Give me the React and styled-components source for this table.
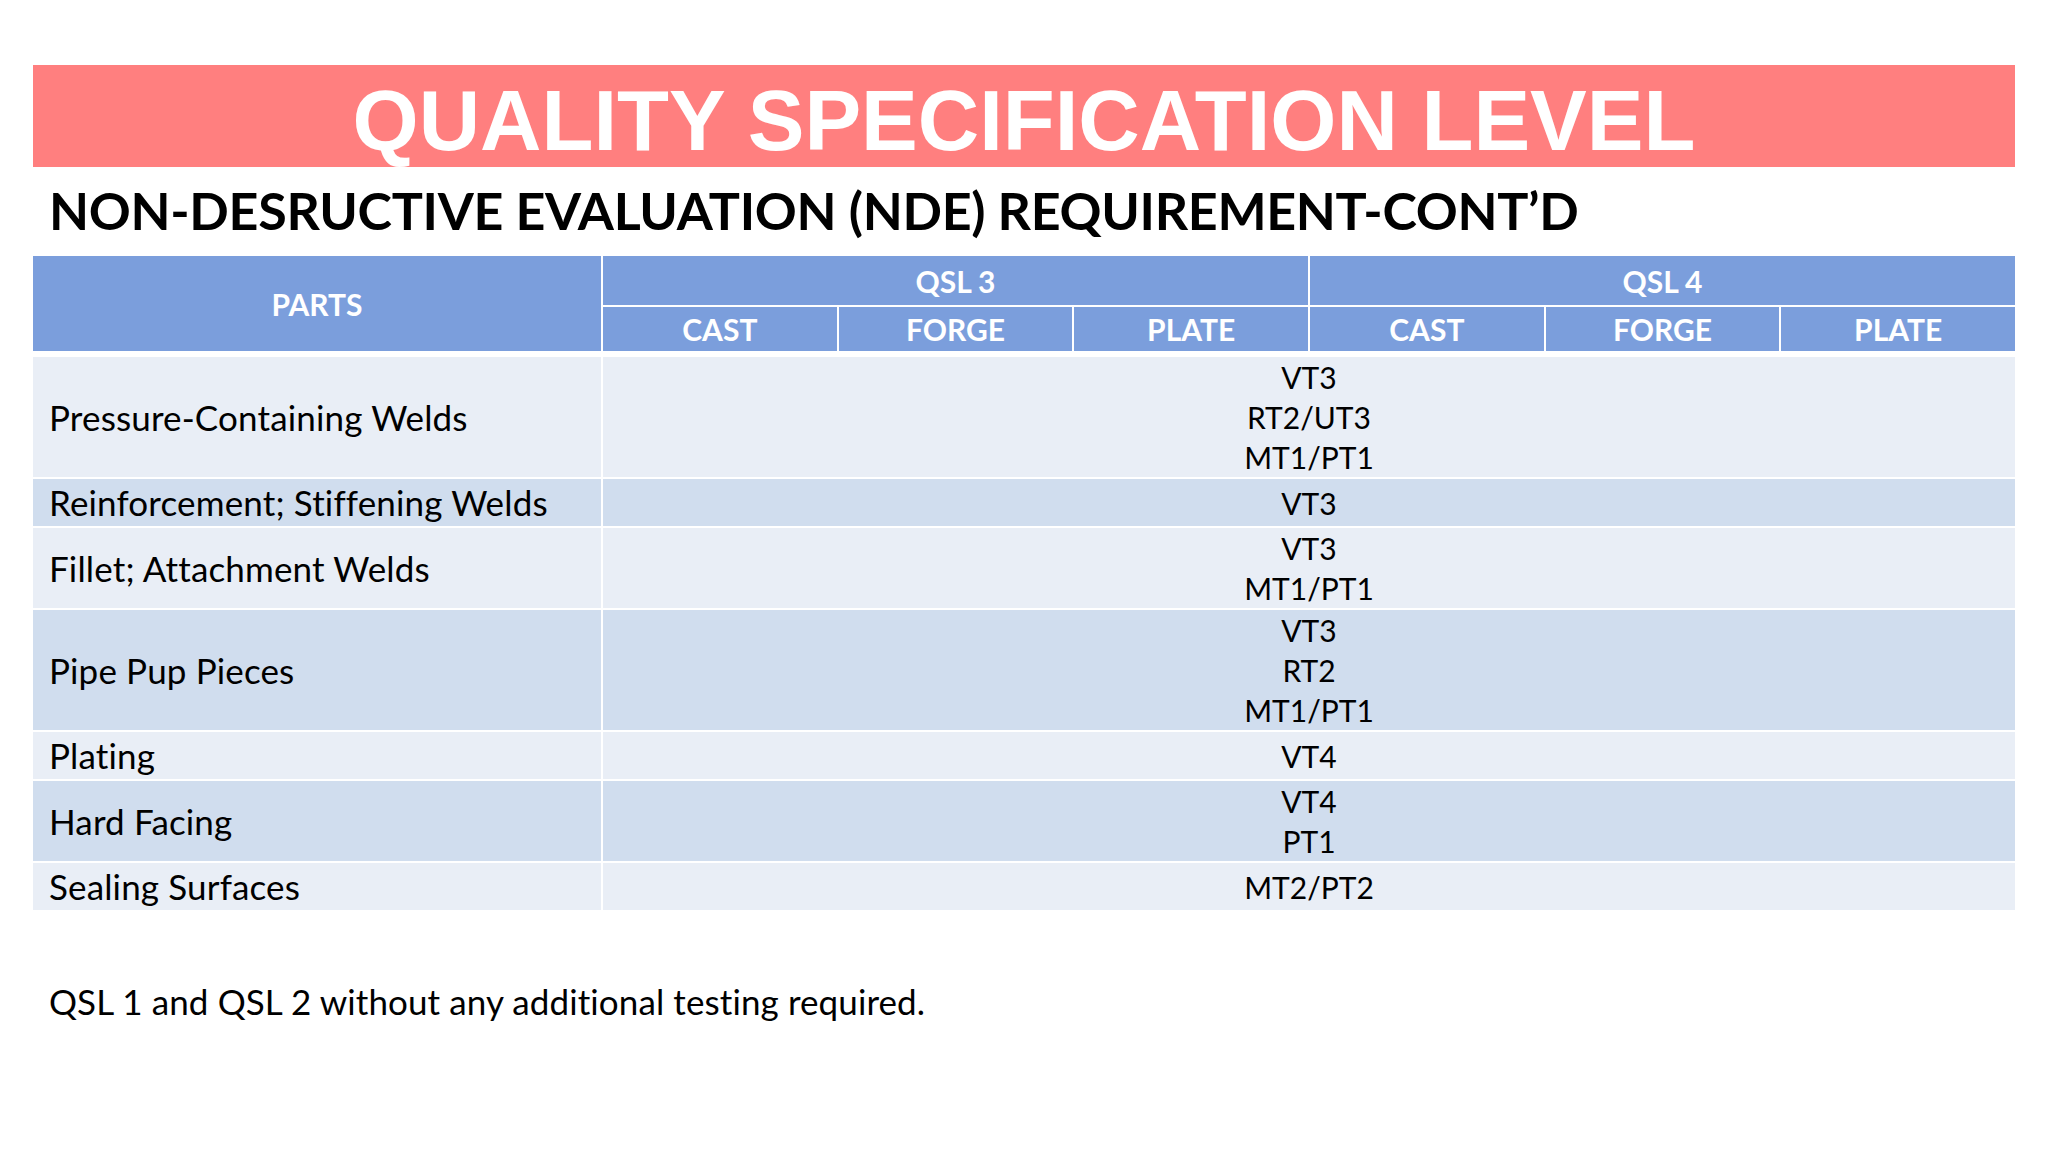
import React from "react";
import styled, { createGlobalStyle } from "styled-components";

const GlobalStyle = createGlobalStyle`
  html, body {
    margin: 0;
    padding: 0;
    background: #ffffff;
  }
  body {
    font-family: "Lato", "Open Sans", sans-serif;
  }
`;

const rows = [
  { part: "Pressure-Containing Welds", tests: ["VT3", "RT2/UT3", "MT1/PT1"] },
  { part: "Reinforcement; Stiffening Welds", tests: ["VT3"] },
  { part: "Fillet; Attachment Welds", tests: ["VT3", "MT1/PT1"] },
  { part: "Pipe Pup Pieces", tests: ["VT3", "RT2", "MT1/PT1"] },
  { part: "Plating", tests: ["VT4"] },
  { part: "Hard Facing", tests: ["VT4", "PT1"] },
  { part: "Sealing Surfaces", tests: ["MT2/PT2"] },
];

const subCols = ["CAST", "FORGE", "PLATE", "CAST", "FORGE", "PLATE"];

function App() {
  return (
    <Page>
      <GlobalStyle />
      <TitleBar>QUALITY SPECIFICATION LEVEL</TitleBar>
      <Subtitle>NON-DESRUCTIVE EVALUATION (NDE) REQUIREMENT-CONT’D</Subtitle>

      <HeaderGrid>
        <HeadCell $rows={2}>PARTS</HeadCell>
        <HeadCell $span={3}>QSL 3</HeadCell>
        <HeadCell $span={3}>QSL 4</HeadCell>
        {subCols.map((c, i) => (
          <HeadCell key={i}>{c}</HeadCell>
        ))}
      </HeaderGrid>

      <Body>
        {rows.map((r, i) => (
          <Row key={r.part} $dark={i % 2 === 1}>
            <PartCell>{r.part}</PartCell>
            <TestCell>
              {r.tests.map((t) => (
                <div key={t}>{t}</div>
              ))}
            </TestCell>
          </Row>
        ))}
      </Body>

      <Note>QSL 1 and QSL 2 without any additional testing required.</Note>
    </Page>
  );
}

export default App;

const Page = styled.div`
  width: 2048px;
  min-height: 1152px;
  box-sizing: border-box;
  padding: 65px 33px 0 33px;
`;

const TitleBar = styled.div`
  background: #ff7f7f;
  color: #ffffff;
  height: 102px;
  box-sizing: border-box;
  padding-top: 10px;
  line-height: 92px;
  text-align: center;
  font-family: "Liberation Sans", Arial, sans-serif;
  font-weight: 700;
  font-size: 85px;
  white-space: nowrap;
`;

const Subtitle = styled.h1`
  margin: 0;
  padding: 0 0 3px 16px;
  height: 89px;
  box-sizing: border-box;
  line-height: 86px;
  font-family: "Lato", sans-serif;
  font-weight: 700;
  font-size: 52px;
  letter-spacing: -0.3px;
  color: #000000;
  white-space: nowrap;
`;

const HeaderGrid = styled.div`
  display: grid;
  grid-template-columns: 568px repeat(6, 1fr);
  grid-template-rows: 49px 44px;
  gap: 2px;
  background: #ffffff;
`;

const HeadCell = styled.div`
  background: #7b9edc;
  color: #ffffff;
  font-family: "Lato", sans-serif;
  font-weight: 700;
  font-size: 30px;
  display: flex;
  align-items: center;
  justify-content: center;
  grid-column: span ${(p) => p.$span || 1};
  grid-row: span ${(p) => p.$rows || 1};
`;

const Body = styled.div`
  display: flex;
  flex-direction: column;
  gap: 2px;
  margin-top: 6px;
`;

const Row = styled.div`
  display: grid;
  grid-template-columns: 568px 1fr;
  column-gap: 2px;
  --cell: ${(p) => (p.$dark ? "#d0ddee" : "#e9eef6")};
`;

const PartCell = styled.div`
  background: var(--cell);
  display: flex;
  align-items: center;
  padding-left: 16px;
  font-family: "Lato", sans-serif;
  font-size: 35px;
  letter-spacing: 0.15px;
  line-height: 47px;
  color: #000000;
  white-space: nowrap;
`;

const TestCell = styled.div`
  background: var(--cell);
  display: flex;
  flex-direction: column;
  justify-content: center;
  align-items: center;
  font-family: "Lato", sans-serif;
  font-size: 30px;
  line-height: 40px;
  color: #000000;
`;

const Note = styled.p`
  margin: 70px 0 0 0;
  padding-left: 16px;
  font-family: "Lato", sans-serif;
  font-size: 35px;
  letter-spacing: 0.1px;
  line-height: 42px;
  color: #000000;
`;
